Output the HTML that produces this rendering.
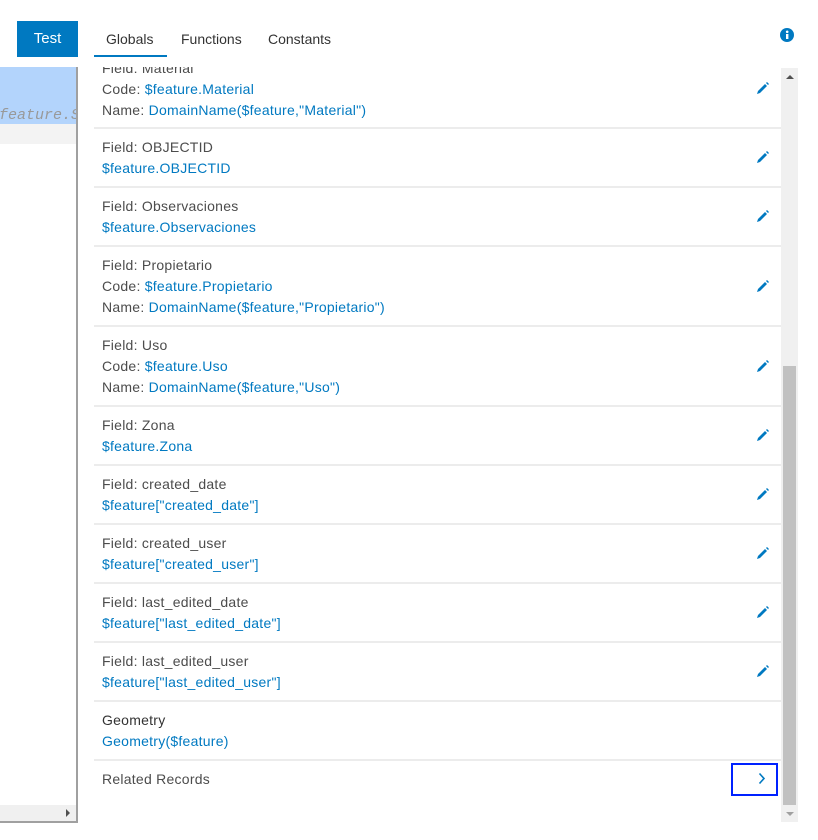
<!DOCTYPE html>
<html><head><style>
body{margin:0;width:818px;height:840px;background:#fff;font-family:"Liberation Sans",sans-serif;position:relative;overflow:hidden;color:#4c4c4c}
.abs{position:absolute}
.row{position:absolute;left:94px;width:687px;border-bottom:2px solid #ececec;font-size:14px;line-height:21px;box-sizing:border-box;padding-left:8px;letter-spacing:0.25px}
.b{color:#0079c1}
</style></head><body>
<div class="abs" style="left:17px;top:21px;width:61px;height:36px;background:#0079c1;color:#fff;font-size:15px;line-height:36px;text-align:center">Test</div>
<div class="abs" style="left:106px;top:31px;font-size:14px;color:#333">Globals</div>
<div class="abs" style="left:181px;top:31px;font-size:14px;color:#333">Functions</div>
<div class="abs" style="left:268px;top:31px;font-size:14px;color:#333">Constants</div>
<div class="abs" style="left:94px;top:55px;width:73px;height:2px;background:#0079c1"></div>
<svg class="abs" style="left:780px;top:28px" width="14" height="14"><circle cx="7" cy="7" r="7" fill="#0079c1"/><rect x="6" y="6" width="2.4" height="5" fill="#fff"/><circle cx="7.2" cy="3.8" r="1.3" fill="#fff"/></svg>
<div class="abs" style="left:0;top:67px;width:76px;height:754px;border-right:2px solid #a0a0a0;border-bottom:2px solid #a0a0a0"></div>
<div class="abs" style="left:0;top:67px;width:76px;height:57px;background:#b3d4fc;overflow:hidden"><span class="abs" style="left:-10px;top:40px;font-family:'Liberation Mono',monospace;font-style:italic;font-size:15px;color:#999;white-space:nowrap">$feature.S</span></div>
<div class="abs" style="left:0;top:124px;width:76px;height:20px;background:#f3f3f3"></div>
<div class="abs" style="left:0;top:805px;width:76px;height:16px;background:#f0f0f0"></div>
<div class="abs" style="left:66px;top:809px;width:0;height:0;border-top:4px solid transparent;border-bottom:4px solid transparent;border-left:4px solid #505050"></div>
<div class="abs" style="left:781px;top:68px;width:17px;height:754px;background:#f0f0f0"></div>
<div class="abs" style="left:783px;top:366px;width:13px;height:439px;background:#c1c1c1"></div>
<div class="abs" style="left:786px;top:75px;border-left:4px solid transparent;border-right:4px solid transparent;border-bottom:4px solid #505050"></div>
<div class="abs" style="left:786px;top:812px;border-left:4px solid transparent;border-right:4px solid transparent;border-top:4px solid #a0a0a0"></div>
<div style="position:absolute;left:0;top:67px;width:818px;height:62px;overflow:hidden"><div class="row" style="top:-13px;height:75px;padding-top:4px">Field: Material<br>Code: <span class="b">$feature.Material</span><br>Name: <span class="b">DomainName($feature,"Material")</span></div></div>
<div class="row" style="top:129px;height:59px;padding-top:8px">Field: OBJECTID<br><span class="b">$feature.OBJECTID</span></div>
<div class="row" style="top:188px;height:59px;padding-top:8px">Field: Observaciones<br><span class="b">$feature.Observaciones</span></div>
<div class="row" style="top:247px;height:80px;padding-top:8px">Field: Propietario<br>Code: <span class="b">$feature.Propietario</span><br>Name: <span class="b">DomainName($feature,"Propietario")</span></div>
<div class="row" style="top:327px;height:80px;padding-top:8px">Field: Uso<br>Code: <span class="b">$feature.Uso</span><br>Name: <span class="b">DomainName($feature,"Uso")</span></div>
<div class="row" style="top:407px;height:59px;padding-top:8px">Field: Zona<br><span class="b">$feature.Zona</span></div>
<div class="row" style="top:466px;height:59px;padding-top:8px">Field: created_date<br><span class="b">$feature["created_date"]</span></div>
<div class="row" style="top:525px;height:59px;padding-top:8px">Field: created_user<br><span class="b">$feature["created_user"]</span></div>
<div class="row" style="top:584px;height:59px;padding-top:8px">Field: last_edited_date<br><span class="b">$feature["last_edited_date"]</span></div>
<div class="row" style="top:643px;height:59px;padding-top:8px">Field: last_edited_user<br><span class="b">$feature["last_edited_user"]</span></div>
<div class="row" style="top:702px;height:59px;padding-top:8px;color:#333">Geometry<br><span class="b">Geometry($feature)</span></div>
<div class="row" style="top:761px;height:40px;padding-top:8px;border:none">Related Records</div>
<div class="abs" style="left:731px;top:763px;width:43px;height:29px;border:2px solid #0022ff"></div>
<svg class="abs" style="left:758px;top:772px" width="8" height="13"><path d="M1.5 1.5L6 6.5L1.5 11.5" stroke="#0079c1" stroke-width="1.6" fill="none"/></svg>
<svg width="0" height="0" style="position:absolute"><defs><g id="p"><path d="M2 13L3 10L10 3L12 5L5 12Z" fill="#0079c1"/><path d="M11 2L12 1L14 3L13 4Z" fill="#0079c1"/></g></defs></svg>
<svg class="abs" style="left:755px;top:81px" width="15" height="15"><use href="#p"/></svg>
<svg class="abs" style="left:755px;top:150px" width="15" height="15"><use href="#p"/></svg>
<svg class="abs" style="left:755px;top:209px" width="15" height="15"><use href="#p"/></svg>
<svg class="abs" style="left:755px;top:279px" width="15" height="15"><use href="#p"/></svg>
<svg class="abs" style="left:755px;top:359px" width="15" height="15"><use href="#p"/></svg>
<svg class="abs" style="left:755px;top:428px" width="15" height="15"><use href="#p"/></svg>
<svg class="abs" style="left:755px;top:487px" width="15" height="15"><use href="#p"/></svg>
<svg class="abs" style="left:755px;top:546px" width="15" height="15"><use href="#p"/></svg>
<svg class="abs" style="left:755px;top:605px" width="15" height="15"><use href="#p"/></svg>
<svg class="abs" style="left:755px;top:664px" width="15" height="15"><use href="#p"/></svg>
</body></html>
